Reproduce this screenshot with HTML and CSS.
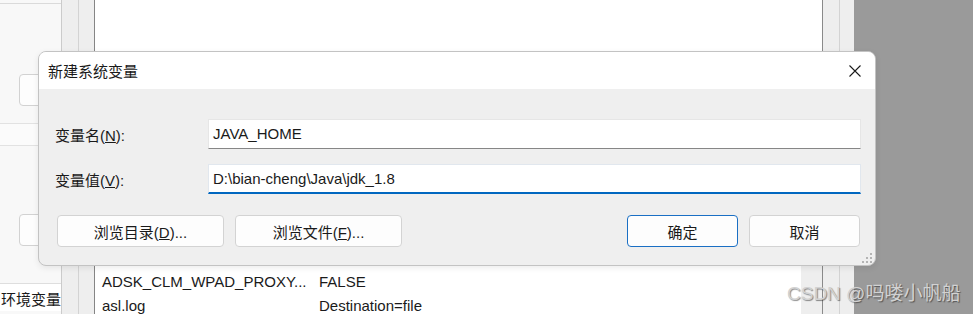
FILE: index.html
```html
<!DOCTYPE html>
<html>
<head>
  <title>新建系统变量</title>
  <link rel="stylesheet" href="styles.css">
</head>
<body>
  <div class="desktop">
    <aside class="side">
      <div class="side-top"></div>
      <div class="side-btn"></div>
      <div class="side-band"></div>
      <div class="side-btn second"></div>
      <div class="side-rule"></div>
      <div class="side-label">环境变量</div>
    </aside>
    <div class="strip"></div>
    <main class="main">
      <div class="main-top"></div>
      <div class="list">
        <div class="rows">
          <div class="row"><span class="col-name">ADSK_CLM_WPAD_PROXY...</span><span>FALSE</span></div>
          <div class="row"><span class="col-name">asl.log</span><span>Destination=file</span></div>
        </div>
        <div class="vscroll"></div>
      </div>
    </main>
    <div class="strip right"></div>
    <div class="backdrop"></div>
  </div>

  <div class="dialog">
    <div class="titlebar">
      <span class="title">新建系统变量</span>
      <svg class="close" width="12" height="12" viewBox="0 0 12 12">
        <path d="M0.5 0.5 L11.5 11.5 M11.5 0.5 L0.5 11.5" stroke="#1b1b1b" stroke-width="1.1" fill="none"/>
      </svg>
    </div>
    <div class="dialog-body">
      <div class="form">
        <label class="field-label">变量名(<u>N</u>):</label>
        <div class="field">JAVA_HOME</div>
        <label class="field-label">变量值(<u>V</u>):</label>
        <div class="field active">D:\bian-cheng\Java\jdk_1.8</div>
      </div>
      <div class="actions">
        <div class="group">
          <button class="btn wide">浏览目录(<u>D</u>)...</button>
          <button class="btn wide">浏览文件(<u>F</u>)...</button>
        </div>
        <div class="group">
          <button class="btn primary">确定</button>
          <button class="btn">取消</button>
        </div>
      </div>
    </div>
    <svg class="grip" width="12" height="12" viewBox="0 0 12 12">
      <rect x="9" y="1" width="2" height="2" fill="#b4b4b4"/>
      <rect x="5" y="5" width="2" height="2" fill="#b4b4b4"/>
      <rect x="9" y="5" width="2" height="2" fill="#b4b4b4"/>
      <rect x="1" y="9" width="2" height="2" fill="#b4b4b4"/>
      <rect x="5" y="9" width="2" height="2" fill="#b4b4b4"/>
      <rect x="9" y="9" width="2" height="2" fill="#b4b4b4"/>
    </svg>
  </div>

  <div class="watermark">CSDN @吗喽小帆船</div>
</body>
</html>
```

FILE: styles.css
```css
body {
  margin: 0;
  font-family: "Liberation Sans", "Noto Sans CJK SC", sans-serif;
  font-size: 15px;
  color: #1a1a1a;
  overflow: hidden;
}
.desktop {
  display: flex;
  width: 973px;
  height: 314px;
}
.side {
  width: 61px;
  border-right: 1px solid #cbcbcb;
  background: #f8f8f8;
  overflow: hidden;
  display: flex;
  flex-direction: column;
}
.side-top {
  height: 3px;
  border-bottom: 1px solid #dadada;
}
.side-btn {
  flex: none;
  margin: 70px 0 0 19px;
  width: 80px;
  height: 32px;
  box-sizing: border-box;
  border: 1px solid #d2d2d2;
  border-radius: 4px;
  background: #fdfdfd;
}
.side-btn.second { margin-top: 68px; }
.side-band {
  flex: none;
  margin-top: 17px;
  height: 21px;
  border-top: 1px solid #e2e2e2;
  border-bottom: 1px solid #e2e2e2;
  background: #fbfbfb;
}
.side-rule {
  flex: none;
  margin-top: 37px;
  border-top: 1px solid #dedede;
}
.side-label {
  padding: 5px 0 0 1px;
  white-space: nowrap;
  line-height: 22px;
  background: #fff;
}
.strip {
  width: 32px;
  border-right: 1px solid #858585;
  background: linear-gradient(to right, #eeeeee 16px, #d3d3d3 16px, #d3d3d3 17px, #eeeeee 17px);
}
.strip.right {
  width: 31px;
  border-right: none;
}
.main {
  width: 727px;
  border-right: 1px solid #8a8a8a;
  background: #fff;
  display: flex;
  flex-direction: column;
}
.main-top { flex: 1; }
.list {
  height: 48px;
  display: flex;
}
.rows {
  flex: 1;
  padding-top: 4px;
}
.row {
  display: flex;
  height: 24px;
  line-height: 24px;
  padding-left: 7px;
  white-space: nowrap;
}
.col-name { width: 217px; }
.vscroll {
  width: 21px;
  background: #eeeeee;
}
.backdrop {
  flex: 1;
  background: #9a9a9a;
}

.dialog {
  position: absolute;
  left: 38px;
  top: 51px;
  width: 838px;
  height: 215px;
  box-sizing: border-box;
  border: 1px solid #c3c3c3;
  border-radius: 8px;
  background: #efefef;
  overflow: hidden;
  box-shadow: 0 2px 6px rgba(0, 0, 0, 0.08);
}
.titlebar {
  height: 37px;
  background: #fff;
  display: flex;
  align-items: center;
  justify-content: space-between;
  padding: 0 14px 0 9px;
}
.title { font-size: 15px; }
.close { display: block; }
.form {
  display: grid;
  grid-template-columns: 153px 1fr;
  row-gap: 15px;
  align-items: center;
  padding: 30px 14px 0 16px;
}
.field-label { white-space: nowrap; }
.field {
  height: 30px;
  box-sizing: border-box;
  padding: 0 4px;
  line-height: 28px;
  background: #fff;
  border: 1px solid #e6e6e6;
  border-bottom: 1px solid #868686;
  white-space: nowrap;
}
.field.active {
  border-color: #e1e7ee;
  border-bottom: 2px solid #0067c0;
}
.actions {
  display: flex;
  justify-content: space-between;
  margin-top: 21px;
  padding: 0 15px 0 18px;
}
.group {
  display: flex;
  gap: 11px;
}
.btn {
  width: 111px;
  height: 32px;
  box-sizing: border-box;
  border: 1px solid #d3d3d3;
  border-radius: 4px;
  background: #fdfdfd;
  font-family: inherit;
  font-size: 15px;
  color: #1a1a1a;
  padding: 0;
}
.btn.wide { width: 167px; }
.btn.primary { border-color: #1a6fc4; }
.grip {
  position: absolute;
  right: 2px;
  bottom: 1px;
}

.watermark {
  position: absolute;
  left: 787px;
  top: 281px;
  font-size: 19px;
  line-height: 26px;
  color: #d2d2d2;
  text-shadow: 1px 1px 1px rgba(0, 0, 0, 0.45);
  white-space: nowrap;
}
```
